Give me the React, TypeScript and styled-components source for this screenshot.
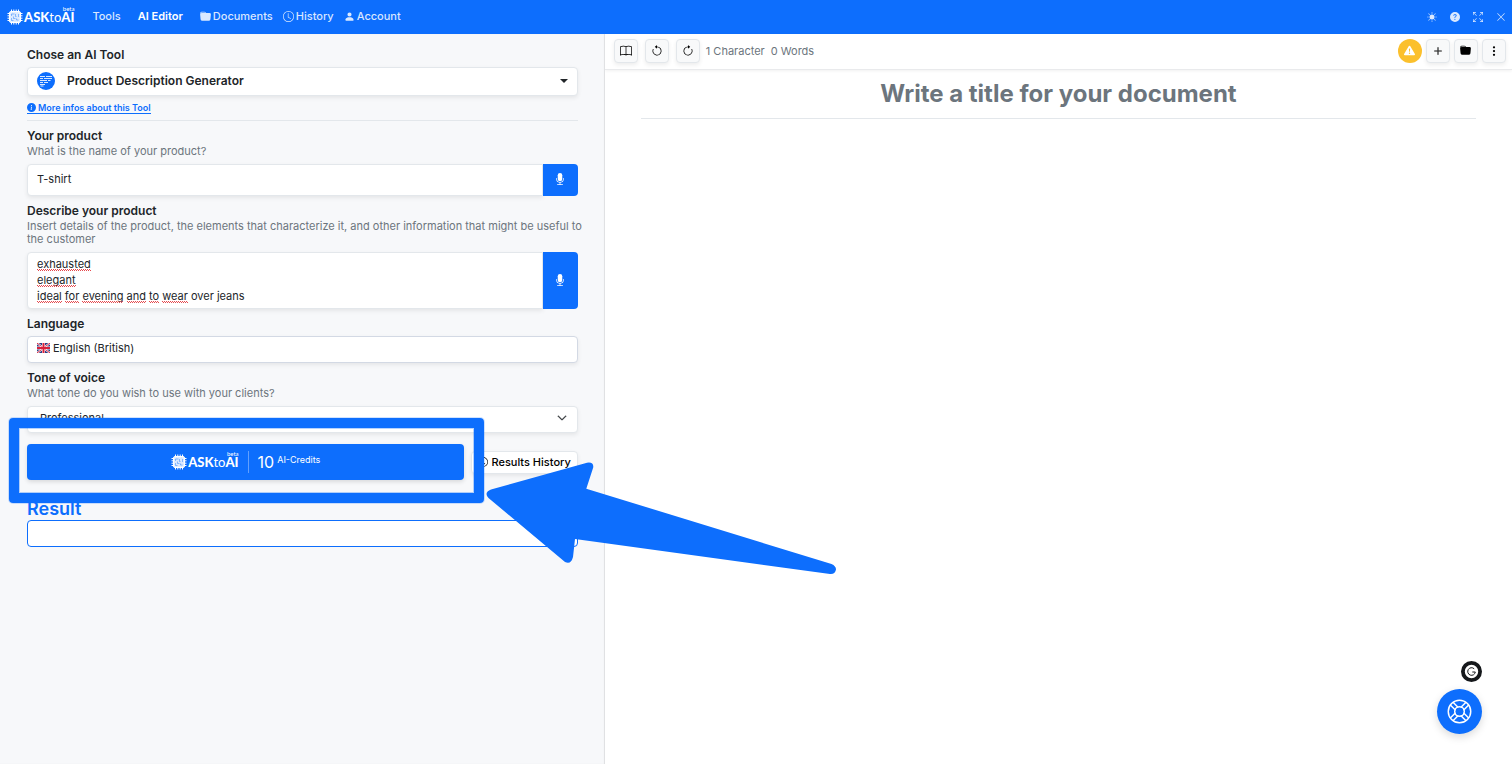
import React from "react";
import styled, { createGlobalStyle, css } from "styled-components";
import {
  BsArrowClockwise,
  BsArrowCounterclockwise,
  BsArrowsFullscreen,
  BsBook,
  BsClock,
  BsExclamationTriangleFill,
  BsFolderFill,
  BsInfoCircleFill,
  BsMicFill,
  BsPersonFill,
  BsPlusLg,
  BsQuestionCircleFill,
  BsSunFill,
  BsThreeDotsVertical,
  BsXLg,
  BsChevronDown,
} from "react-icons/bs";

const BLUE = "#0d6efd";
const BORDER = "#e3e7eb";
const MUTED = "#6c757d";
const INK = "#212529";

const GlobalStyle = createGlobalStyle`
  *, *::before, *::after { box-sizing: border-box; }
  body {
    margin: 0;
    background: #fff;
    color: ${INK};
    font-family: Inter, "Liberation Sans", sans-serif;
    font-size: 11px;
    line-height: 16px;
    overflow-x: hidden;
  }
  button, input, textarea, select { font: inherit; color: inherit; margin: 0; }
  button { cursor: pointer; }
  svg { display: block; flex: none; }
`;

const Page = styled.div`
  display: flex;
  flex-direction: column;
  min-height: 100vh;
`;

const Navbar = styled.header`
  display: flex;
  align-items: center;
  height: 34px;
  padding: 0 6px 0 7px;
  background: ${BLUE};
  color: #fff;
`;

const LogoRoot = styled.span`
  display: inline-flex;
  align-items: center;
  gap: 1px;
  color: #fff;
`;

const Wordmark = styled.span`
  position: relative;
  font-family: Lato, "Liberation Sans", sans-serif;
  font-size: 13px;
  line-height: 16px;
  font-weight: 900;
`;

const WordmarkThin = styled.span`
  font-weight: 400;
`;

const Beta = styled.sup`
  position: absolute;
  top: -4px;
  right: 0;
  font-size: 6px;
  line-height: 8px;
  font-weight: 400;
`;

const Nav = styled.nav`
  display: flex;
  align-items: center;
  gap: 10px;
  margin-left: 18px;
  padding-bottom: 2px;
`;

const NavLink = styled.a<{ $active?: boolean; $wide?: boolean }>`
  display: inline-flex;
  align-items: center;
  gap: 2px;
  margin-right: ${(p) => (p.$wide ? 7 : 0)}px;
  color: ${(p) => (p.$active ? "#fff" : "rgba(255, 255, 255, 0.85)")};
  font-weight: ${(p) => (p.$active ? 600 : 500)};
  text-decoration: none;
`;

const NavActions = styled.div`
  display: flex;
  gap: 13px;
  margin-left: auto;
`;

const NavIconButton = styled.button`
  display: inline-flex;
  padding: 0;
  border: 0;
  background: none;
  color: rgba(255, 255, 255, 0.85);
`;

const Workspace = styled.main`
  display: grid;
  grid-template-columns: 2fr 3fr;
  flex: 1;
`;

const ToolPanel = styled.form`
  position: relative;
  z-index: 1;
  padding: 13px 27px 24px;
  background: #f7f8fa;
  box-shadow: inset -1px 0 1px rgba(0, 0, 0, 0.1);
`;

const Label = styled.label`
  display: block;
  font-size: 12px;
  line-height: 16px;
  font-weight: 600;
`;

const Hint = styled.p`
  margin: 1px -8px 0 0;
  color: ${MUTED};
  line-height: 13px;
`;

const boxed = css`
  border: 1px solid ${BORDER};
  border-radius: 4px;
  background: #fff;
  box-shadow: 0 2px 4px rgba(0, 0, 0, 0.075);
`;

const Field = styled.div`
  margin-top: 7px;
`;

const ToolPicker = styled.button`
  ${boxed}
  display: flex;
  align-items: center;
  width: 100%;
  height: 29px;
  margin-top: 4px;
  padding: 0 9px 2px;
  font-size: 12px;
  font-weight: 600;
  text-align: left;
`;

const ToolName = styled.span`
  flex: 1;
  margin-left: 12px;
`;

const Caret = styled.span`
  border: 4px solid transparent;
  border-top-color: ${INK};
  border-bottom: 0;
`;

const InfoLink = styled.a`
  display: flex;
  align-items: center;
  gap: 2px;
  width: fit-content;
  margin-top: 6px;
  border-bottom: 1px solid ${BLUE};
  color: ${BLUE};
  font-size: 9px;
  line-height: 11px;
  font-weight: 600;
  text-decoration: none;
`;

const Divider = styled.hr`
  margin: 6px 0 0;
  border: 0;
  border-top: 1px solid ${BORDER};
`;

const InputGroup = styled.div<{ $tall?: boolean }>`
  display: flex;
  height: ${(p) => (p.$tall ? 57 : 32)}px;
  margin-top: 6px;
`;

const TextInput = styled.input`
  ${boxed}
  flex: 1;
  min-width: 0;
  padding: 0 9px 2px;
  border-radius: 4px 0 0 4px;
`;

const EditorStack = styled.div`
  ${boxed}
  display: grid;
  flex: 1;
  min-width: 0;
  border-radius: 4px 0 0 4px;
`;

const textLayer = css`
  grid-area: 1 / 1;
  width: 100%;
  padding: 3px 9px 0;
  line-height: 16px;
  white-space: pre-wrap;
`;

const TextArea = styled.textarea`
  ${textLayer}
  border: 0;
  outline: 0;
  resize: none;
  overflow: hidden;
  background: transparent;
`;

const SpellLayer = styled.div`
  ${textLayer}
  color: transparent;
  pointer-events: none;
`;

const Misspelt = styled.span`
  background-image: linear-gradient(90deg, #e5484d 1px, transparent 1px),
    linear-gradient(90deg, transparent 1px, #e5484d 1px);
  background-size: 2px 1px, 2px 1px;
  background-repeat: repeat-x;
  background-position: 0 calc(100% - 1px), 0 100%;
`;

const MicButton = styled.button`
  display: flex;
  align-items: center;
  justify-content: center;
  width: 35px;
  padding: 0 0 2px;
  border: 0;
  border-radius: 0 4px 4px 0;
  background: ${BLUE};
  color: #fff;
`;

const SelectBox = styled.div<{ $strong?: boolean }>`
  ${boxed}
  display: flex;
  align-items: center;
  gap: 3px;
  height: 27px;
  margin-top: ${(p) => (p.$strong ? 4 : 6)}px;
  padding: 0 10px 3px ${(p) => (p.$strong ? 9 : 12)}px;
  border-color: ${(p) => (p.$strong ? "#d3d9e4" : BORDER)};
`;

const Select = styled.select`
  flex: 1;
  min-width: 0;
  padding: 0;
  border: 0;
  outline: 0;
  appearance: none;
  background: transparent;
`;

const ActionRow = styled.div`
  display: flex;
  align-items: center;
  gap: 7px;
  margin-top: 11px;
`;

const GenerateWrap = styled.div`
  position: relative;
  z-index: 1;
  flex: 1;
`;

const GenerateButton = styled.button`
  display: flex;
  align-items: center;
  justify-content: center;
  width: 100%;
  height: 36px;
  padding: 0;
  border: 0;
  border-radius: 4px;
  background: ${BLUE};
  box-shadow: 0 2px 4px rgba(0, 0, 0, 0.12);
  color: #fff;
`;

const Credits = styled.span`
  display: flex;
  align-items: center;
  gap: 3px;
  height: 22px;
  margin-left: 9px;
  padding-left: 9px;
  border-left: 1px solid rgba(255, 255, 255, 0.35);
  font-size: 16px;
`;

const CreditsUnit = styled.span`
  margin-bottom: 4px;
  font-size: 9px;
  line-height: 12px;
`;

const HistoryButton = styled.button`
  ${boxed}
  display: flex;
  align-items: center;
  gap: 3px;
  height: 23px;
  padding: 0 6px;
  color: #000;
  font-weight: 500;
`;

const HighlightFrame = styled.div`
  position: absolute;
  inset: -26px -20px -23px -18px;
  border: 10px solid ${BLUE};
  border-radius: 4px;
  box-shadow: 0 0 0 1px rgba(13, 110, 253, 0.2), inset 0 0 0 1px rgba(13, 110, 253, 0.3);
  pointer-events: none;
`;

const PointerArrow = styled.svg`
  position: absolute;
  top: 18px;
  left: calc(100% + 22px);
  pointer-events: none;
`;

const ResultTitle = styled.h2`
  margin: 17px 0 0;
  color: ${BLUE};
  font-size: 18px;
  line-height: 23px;
  font-weight: 600;
`;

const ResultBox = styled.output`
  display: block;
  height: 27px;
  border: 1px solid ${BLUE};
  border-radius: 4px;
  background: #fff;
`;

const DocumentPanel = styled.section`
  display: flex;
  flex-direction: column;
  min-width: 0;
`;

const Toolbar = styled.div`
  display: flex;
  align-items: center;
  gap: 6px;
  height: 36px;
  padding: 0 6px 1px 9px;
  border-bottom: 1px solid #e9eaec;
  box-shadow: 0 1px 3px rgba(0, 0, 0, 0.06);
`;

const ToolGroup = styled.div<{ $end?: boolean }>`
  display: flex;
  align-items: center;
  gap: ${(p) => (p.$end ? 4 : 7)}px;
  margin-left: ${(p) => (p.$end ? "auto" : 0)};
`;

const ToolButton = styled.button<{ $warning?: boolean }>`
  ${boxed}
  display: flex;
  align-items: center;
  justify-content: center;
  width: 24px;
  height: 24px;
  padding: 0 0 1px;
  background: #f8f9fa;
  color: #000;
  ${(p) =>
    p.$warning &&
    css`
      border: 0;
      border-radius: 50%;
      background: #fbc02d;
      box-shadow: none;
      color: #fff;
    `}
`;

const Counter = styled.span`
  display: flex;
  gap: 6px;
  color: ${MUTED};
`;

const TitleInput = styled.input`
  margin: 0 36px;
  height: 49px;
  padding: 0 0 2px;
  border: 0;
  border-bottom: 1px solid ${BORDER};
  outline: 0;
  background: transparent;
  font-size: 24px;
  font-weight: 700;
  text-align: center;
  &::placeholder { color: ${MUTED}; opacity: 1; }
`;

const FloatingTools = styled.div`
  position: fixed;
  right: 30px;
  bottom: 30px;
  display: flex;
  flex-direction: column;
  align-items: flex-end;
  gap: 7px;
`;

const GrammarBadge = styled.button`
  display: flex;
  padding: 0;
  border: 0;
  background: none;
`;

const HelpButton = styled.button`
  display: flex;
  align-items: center;
  justify-content: center;
  width: 45px;
  height: 45px;
  padding: 0;
  border: 0;
  border-radius: 50%;
  background: ${BLUE};
  box-shadow: 0 3px 8px rgba(0, 0, 0, 0.15);
  color: #fff;
`;

function ChipIcon() {
  return (
    <svg width="16" height="16" viewBox="0 0 16 16" fill="none" stroke="currentColor">
      <rect x="2.5" y="2.5" width="11" height="11" rx="1.5" fill="currentColor" fillOpacity="0.85" />
      <path
        d="M4.5 0.5v3M6.8 0.5v3M9.2 0.5v3M11.5 0.5v3M4.5 12.5v3M6.8 12.5v3M9.2 12.5v3M11.5 12.5v3M.5 4.5h3M.5 6.8h3M.5 9.2h3M.5 11.5h3M12.5 4.5h3M12.5 6.8h3M12.5 9.2h3M12.5 11.5h3"
        strokeWidth="1"
      />
      <path
        d="M4.5 7V5h3M4.5 9v2.5h2M6.5 7.5v2h2M8.5 5v2.5h1M11.5 5v3M9.5 9.5V11h2"
        stroke={BLUE}
        strokeOpacity="0.7"
        strokeWidth="0.6"
      />
    </svg>
  );
}

function Logo() {
  return (
    <LogoRoot>
      <ChipIcon />
      <Wordmark>
        ASK<WordmarkThin>to</WordmarkThin>AI
        <Beta>beta</Beta>
      </Wordmark>
    </LogoRoot>
  );
}

function ToolAvatar() {
  return (
    <svg width="18" height="18" viewBox="0 0 18 18">
      <circle cx="9" cy="9" r="9" fill={BLUE} />
      <path
        d="M3 4.500h5M9 4.500h6M3 6.500h3M7 6.500h8M3 8.500h7M11 8.500h2.500M3 10.500h3M7 10.500h4M3 12.500h5M3.500 14h3"
        stroke="#fff"
        strokeOpacity=".85"
        strokeWidth="1.100"
      />
    </svg>
  );
}

function BritishFlag() {
  return (
    <svg width="13" height="10" viewBox="0 0 26 20">
      <rect width="26" height="20" rx="2" fill="#2a3f86" />
      <path d="M0 0l26 20M26 0L0 20" stroke="#fff" strokeWidth="4" />
      <path d="M0 0l26 20M26 0L0 20" stroke="#d8203a" strokeWidth="2" />
      <path d="M13 0v20M0 10h26" stroke="#fff" strokeWidth="6" />
      <path d="M13 0v20M0 10h26" stroke="#d8203a" strokeWidth="4" />
    </svg>
  );
}

function GrammarIcon() {
  return (
    <svg width="21" height="21" viewBox="0 0 21 21" fill="none">
      <circle cx="10.500" cy="10.500" r="8.600" fill="#fff" stroke="#15181b" strokeWidth="3.800" />
      <path d="M13.200 7.800A3.800 3.800 0 1 0 14.300 11H11.300" stroke="#15181b" strokeWidth="1" />
    </svg>
  );
}

function LifebuoyIcon() {
  return (
    <svg width="25" height="25" viewBox="0 0 24 24" fill="none" stroke="currentColor" strokeWidth="1.400">
      <circle cx="12" cy="12" r="10.800" />
      <circle cx="12" cy="12" r="4.600" />
      <path d="M3.200 5.800l5 5M5.800 3.200l5 5M20.800 5.800l-5 5M18.200 3.200l-5 5M3.200 18.200l5-5M5.800 20.800l5-5M20.800 18.200l-5-5M18.200 20.800l-5-5" />
    </svg>
  );
}

export default function App() {
  return (
    <Page>
      <GlobalStyle />
      <Navbar>
        <Logo />
        <Nav>
          <NavLink href="#tools" $wide>Tools</NavLink>
          <NavLink href="#editor" $active $wide>AI Editor</NavLink>
          <NavLink href="#documents"><BsFolderFill size={11} />Documents</NavLink>
          <NavLink href="#history"><BsClock size={11} />History</NavLink>
          <NavLink href="#account"><BsPersonFill size={11} />Account</NavLink>
        </Nav>
        <NavActions>
          <NavIconButton aria-label="Theme"><BsSunFill size={10} /></NavIconButton>
          <NavIconButton aria-label="Help"><BsQuestionCircleFill size={10} /></NavIconButton>
          <NavIconButton aria-label="Full screen"><BsArrowsFullscreen size={10} /></NavIconButton>
          <NavIconButton aria-label="Close"><BsXLg size={10} /></NavIconButton>
        </NavActions>
      </Navbar>

      <Workspace>
        <ToolPanel onSubmit={(e) => e.preventDefault()}>
          <Label htmlFor="tool">Chose an AI Tool</Label>
          <ToolPicker id="tool" type="button">
            <ToolAvatar />
            <ToolName>Product Description Generator</ToolName>
            <Caret />
          </ToolPicker>
          <InfoLink href="#info"><BsInfoCircleFill size={9} />More infos about this Tool</InfoLink>
          <Divider />

          <Field>
            <Label htmlFor="product">Your product</Label>
            <Hint>What is the name of your product?</Hint>
            <InputGroup>
              <TextInput id="product" defaultValue="T-shirt" />
              <MicButton type="button" aria-label="Dictate product"><BsMicFill size={12} /></MicButton>
            </InputGroup>
          </Field>

          <Field>
            <Label htmlFor="details">Describe your product</Label>
            <Hint>
              Insert details of the product, the elements that characterize it, and other information that might be
              useful to the customer
            </Hint>
            <InputGroup $tall>
              <EditorStack>
                <TextArea
                  id="details"
                  rows={3}
                  spellCheck={false}
                  defaultValue={"exhausted\nelegant\nideal for evening and to wear over jeans"}
                />
                <SpellLayer aria-hidden="true">
                  <Misspelt>exhausted</Misspelt>{"\n"}
                  <Misspelt>elegant</Misspelt>{"\n"}
                  <Misspelt>ideal</Misspelt> <Misspelt>for</Misspelt> <Misspelt>evening</Misspelt>{" "}
                  <Misspelt>and</Misspelt> <Misspelt>to</Misspelt> <Misspelt>wear</Misspelt>
                </SpellLayer>
              </EditorStack>
              <MicButton type="button" aria-label="Dictate description"><BsMicFill size={12} /></MicButton>
            </InputGroup>
          </Field>

          <Field>
            <Label htmlFor="language">Language</Label>
            <SelectBox $strong>
              <BritishFlag />
              <Select id="language"><option>English (British)</option></Select>
            </SelectBox>
          </Field>

          <Field>
            <Label htmlFor="tone">Tone of voice</Label>
            <Hint>What tone do you wish to use with your clients?</Hint>
            <SelectBox>
              <Select id="tone"><option>Professional</option></Select>
              <BsChevronDown size={10} strokeWidth={1} />
            </SelectBox>
          </Field>

          <ActionRow>
            <GenerateWrap>
              <GenerateButton type="submit">
                <Logo />
                <Credits>10 <CreditsUnit>AI-Credits</CreditsUnit></Credits>
              </GenerateButton>
              <HighlightFrame />
              <PointerArrow width="351" height="113" viewBox="0 0 351 113" aria-hidden="true">
                <path
                  d="M5 27.500L101 .700Q108-.300 107.200 5.500L100.300 26.700L345.500 102Q350 104 350 107.500Q349 112.500 344 112L89 77L87 95Q85 103 79 100L2.500 36Q-2.500 30.500 5 27.500Z"
                  fill={BLUE}
                />
              </PointerArrow>
            </GenerateWrap>
            <HistoryButton type="button"><BsClock size={10} />Results History</HistoryButton>
          </ActionRow>

          <ResultTitle>Result</ResultTitle>
          <ResultBox />
        </ToolPanel>

        <DocumentPanel>
          <Toolbar>
            <ToolGroup>
              <ToolButton aria-label="Read"><BsBook size={12} /></ToolButton>
              <ToolButton aria-label="Undo"><BsArrowCounterclockwise size={12} /></ToolButton>
              <ToolButton aria-label="Redo"><BsArrowClockwise size={12} /></ToolButton>
            </ToolGroup>
            <Counter><span>1 Character</span><span>0 Words</span></Counter>
            <ToolGroup $end>
              <ToolButton $warning aria-label="Warnings"><BsExclamationTriangleFill size={11} /></ToolButton>
              <ToolButton aria-label="New"><BsPlusLg size={10} stroke="currentColor" strokeWidth={0.5} /></ToolButton>
              <ToolButton aria-label="Open"><BsFolderFill size={11} /></ToolButton>
              <ToolButton aria-label="More"><BsThreeDotsVertical size={12} /></ToolButton>
            </ToolGroup>
          </Toolbar>
          <TitleInput aria-label="Document title" placeholder="Write a title for your document" />
        </DocumentPanel>
      </Workspace>

      <FloatingTools>
        <GrammarBadge aria-label="Grammar"><GrammarIcon /></GrammarBadge>
        <HelpButton aria-label="Support"><LifebuoyIcon /></HelpButton>
      </FloatingTools>
    </Page>
  );
}
